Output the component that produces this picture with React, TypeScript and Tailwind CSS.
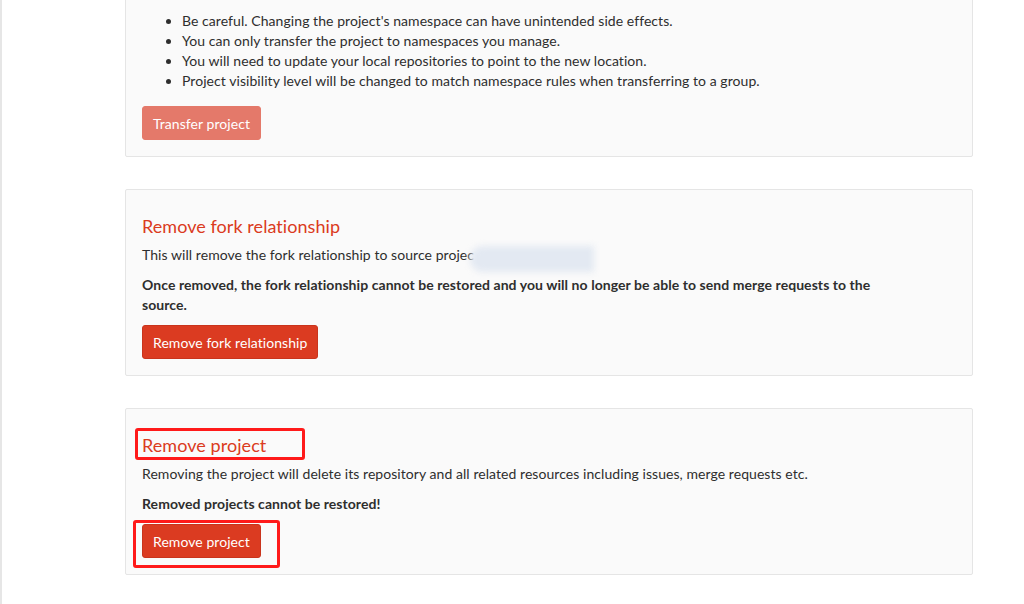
export default function App() {
  return (
    <div className="min-h-[604px] w-[1024px] overflow-hidden border-l-2 border-[#e6e6e6] bg-white font-['Lato',sans-serif] text-[14px] tracking-[0.06px] text-[#2e2e2e]">
      <div className="ml-[123px] w-[848px]">
        <section className="-mt-[40px] mb-8 rounded-[2px] border border-[#e5e5e5] bg-[#fafafa] px-4 pb-4 pt-[50px]">
          <ul className="mb-[15px] list-disc pl-10 leading-5">
            <li>Be careful. Changing the project's namespace can have unintended side effects.</li>
            <li>You can only transfer the project to namespaces you manage.</li>
            <li>You will need to update your local repositories to point to the new location.</li>
            <li>Project visibility level will be changed to match namespace rules when transferring to a group.</li>
          </ul>
          <button
            type="button"
            disabled
            className="h-[34px] rounded-[3px] border border-[#e4796a] bg-[#e4796a] px-[10px] text-[14px] text-white"
          >
            Transfer project
          </button>
        </section>

        <section className="mb-8 rounded-[2px] border border-[#e5e5e5] bg-[#fafafa] p-4">
          <h4 className="mb-[7px] mt-2 text-[18px] leading-6 text-[#db3b21]">Remove fork relationship</h4>
          <p className="mb-[10px] leading-5">
            This will remove the fork relationship to source projec
            <span className="relative inline-block w-[4px]">
              <span className="absolute -left-[4px] -top-[14px] h-[26px] w-[124px] rounded-l-full rounded-r-[40%] bg-[#e3e9f2] blur-[3px]" />
            </span>
          </p>
          <p className="mb-[10px] font-bold leading-5">
            Once removed, the fork relationship cannot be restored and you will no longer be able to send merge requests to the
            <br />
            source.
          </p>
          <button
            type="button"
            className="h-[34px] rounded-[3px] border border-[#c9341c] bg-[#db3b21] px-[10px] text-[14px] text-white"
          >
            Remove fork relationship
          </button>
        </section>

        <section className="relative rounded-[2px] border border-[#e5e5e5] bg-[#fafafa] p-4">
          <h4 className="mb-[7px] mt-2 text-[18px] leading-6 text-[#db3b21]">Remove project</h4>
          <p className="mb-[10px] leading-5">
            Removing the project will delete its repository and all related resources including issues, merge requests etc.
          </p>
          <p className="mb-[10px] font-bold leading-5">Removed projects cannot be restored!</p>
          <button
            type="button"
            className="h-[34px] rounded-[3px] border border-[#c9341c] bg-[#db3b21] px-[10px] text-[14px] text-white"
          >
            Remove project
          </button>
          <div className="pointer-events-none absolute left-[9px] top-[19px] h-[32px] w-[170px] rounded-[3px] border-[3px] border-[#ff1a1a]" />
          <div className="pointer-events-none absolute left-[7px] top-[111px] h-[48px] w-[147px] rounded-[3px] border-[3px] border-[#ff1a1a]" />
        </section>
      </div>
    </div>
  );
}
